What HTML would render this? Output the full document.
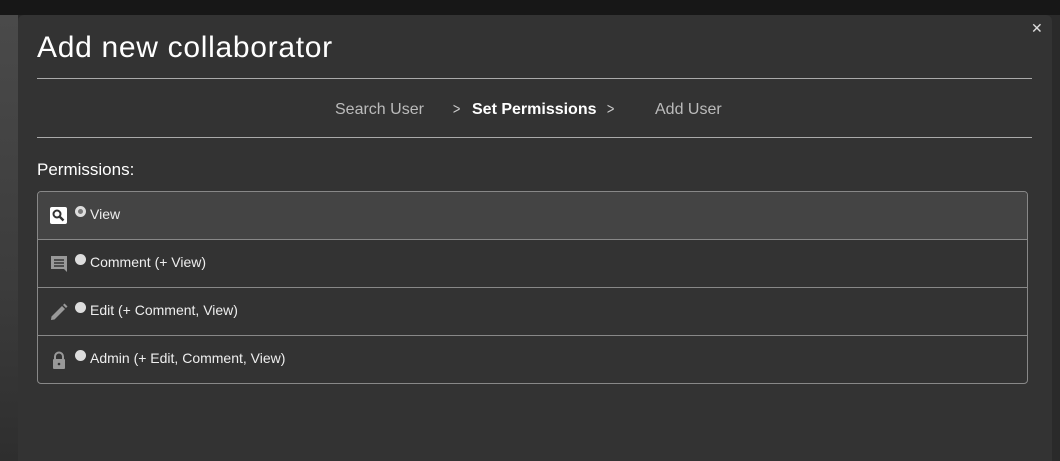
<!DOCTYPE html>
<html><head><meta charset="utf-8"><style>
*{box-sizing:border-box}
html,body{margin:0;width:1060px;height:461px;overflow:hidden}
body{background:#2a2a2a;font-family:"Liberation Sans",sans-serif;position:relative}
.top{position:absolute;left:0;top:0;width:1060px;height:15px;background:#171717}
.left{position:absolute;left:0;top:15px;width:18px;height:446px;background:linear-gradient(#4a4a4a,#3c3c3c 60%,#2e2e2e)}
.right{position:absolute;left:1052px;top:15px;width:8px;height:446px;background:#2a2a2a}
.modal{position:absolute;left:18px;top:15px;width:1034px;height:446px;background:#333;border-radius:6px 6px 0 0}
h1{position:absolute;left:19px;top:16px;margin:0;font-weight:normal;font-size:30px;color:#fff;letter-spacing:0.7px}
.close{position:absolute;left:1013px;top:5px;color:#ddd;font-size:14px}
.hr{position:absolute;left:19px;width:995px;height:1px;background:#aaa}
.bc{position:absolute;top:86px;font-size:16px;color:#bbb}
.lbl{position:absolute;left:19px;top:145px;font-size:17px;color:#fff}
.list{position:absolute;left:19px;top:176px;width:991px;height:193px;border:1px solid #888;border-radius:4px;overflow:hidden}
.row{height:48px;border-bottom:1px solid #888;position:relative;color:#eee;font-size:14px}
.row:last-child{border-bottom:none}
.row.sel{background:#444}
.row .t{position:absolute;left:52px;top:14px}
.row .r{position:absolute;left:37px;top:14px;width:11px;height:11px;border-radius:50%;background:#ddd}
.row .ic{position:absolute;left:12px;top:15px}
</style></head><body>
<div class="top"></div><div class="left"></div><div class="right"></div>
<div class="modal">
<h1>Add new collaborator</h1>
<div class="close">✕</div>
<div class="hr" style="top:63px"></div>
<div class="bc" style="left:317px">Search User</div>
<div class="bc" style="left:434px;color:#ccc;transform:scaleX(0.8)">&gt;</div>
<div class="bc" style="left:454px;color:#fff;font-weight:bold">Set Permissions</div>
<div class="bc" style="left:588px;color:#ccc;transform:scaleX(0.8)">&gt;</div>
<div class="bc" style="left:637px">Add User</div>
<div class="hr" style="top:122px"></div>
<div class="lbl">Permissions:</div>
<div class="list">
<div class="row sel"><svg class="ic" width="17" height="17" viewBox="0 0 17 17" style="top:15px"><rect width="17" height="17" rx="2" fill="#fff"/><circle cx="7" cy="7" r="3.5" fill="none" stroke="#333" stroke-width="2"/><path d="M9.5 9.5L13.5 13.5" stroke="#333" stroke-width="2.4"/></svg><span class="r" style="border:3px solid #ddd;background:#777"></span><span class="t">View</span></div>
<div class="row"><svg class="ic" width="18" height="18" viewBox="0 0 18 18"><path d="M1 1H17V17L14 14H1Z" fill="#999"/><path d="M4 5H14M4 8H14M4 11H14" stroke="#333" stroke-width="1.4"/></svg><span class="r"></span><span class="t">Comment (+ View)</span></div>
<div class="row"><svg class="ic" width="18" height="18" viewBox="0 0 18 18"><path d="M1 17L1.5 13.5L12 3L15 6L4.5 16.5Z" fill="#999"/><path d="M13 2L14.5 0.5L17.5 3.5L16 5Z" fill="#999"/></svg><span class="r"></span><span class="t">Edit (+ Comment, View)</span></div>
<div class="row"><svg class="ic" width="18" height="18" viewBox="0 0 18 18"><path d="M5 8V5.5A4 4 0 0 1 13 5.5V8" fill="none" stroke="#999" stroke-width="2"/><rect x="3" y="8" width="12" height="10" rx="1" fill="#999"/><circle cx="9" cy="13" r="1.3" fill="#333"/></svg><span class="r"></span><span class="t">Admin (+ Edit, Comment, View)</span></div>
</div>
</div>
</body></html>
